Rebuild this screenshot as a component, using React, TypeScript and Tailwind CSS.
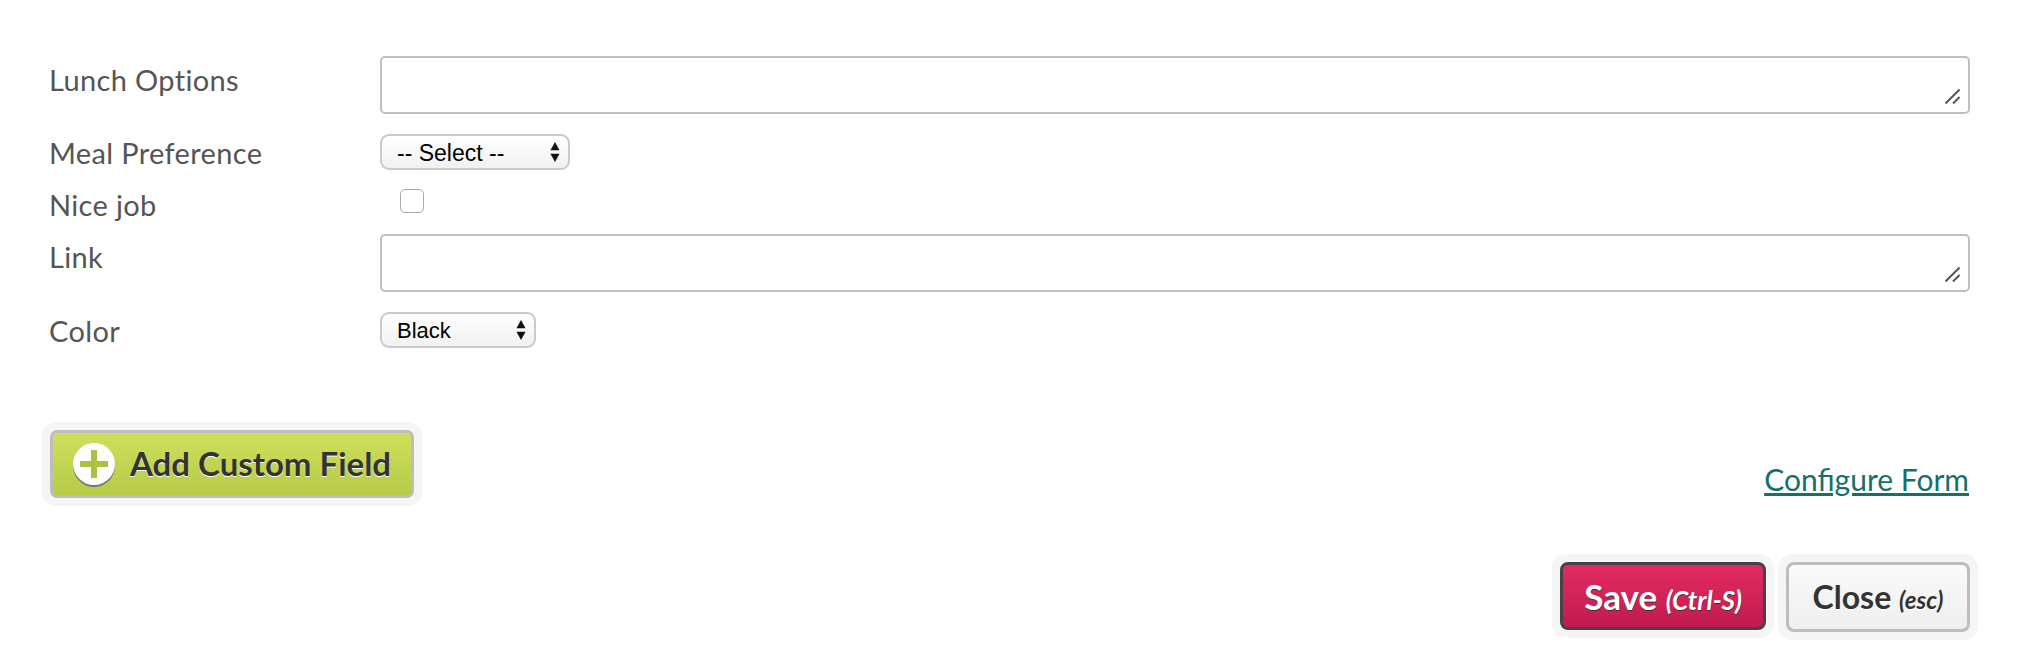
import React from 'react';

const labelClass = "w-[331px] -ml-px shrink-0 text-[29px] tracking-[0.35px] leading-[34px] text-[#555555]";

const NoteArea = () => (
  <div className="relative w-full h-[58px]">
    <textarea className="block w-full h-full rounded-[5px] border-2 border-[#c0c0c0] bg-white resize-none outline-none" />
    {/* resize grip */}
    <svg viewBox="0 0 15 15" className="absolute right-[10px] bottom-[10px] w-[15px] h-[15px] pointer-events-none" stroke="#555555" strokeWidth="2" fill="none">
      <path d="M0.5 14.5L14.5 0.5" />
      <path d="M8 14.5L14.5 8" />
    </svg>
  </div>
);

const SelectArrows = () => (
  <svg viewBox="0 0 10 22" className="absolute right-[10px] top-[8px] w-[10px] h-[20px] pointer-events-none" fill="#111">
    <path d="M5 0L10 9H0Z" />
    <path d="M5 22L0 13H10Z" />
  </svg>
);

const FakeSelect = ({ value, widthClass, textClass }: { value: string; widthClass: string; textClass: string }) => (
  <div className={`relative ${widthClass}`}>
    <select
      defaultValue={value}
      className={`block w-full h-[36px] appearance-none rounded-[9px] border-2 border-[#c9c9c9] bg-gradient-to-b from-white to-[#f1f1f1] pl-[15px] text-black outline-none font-['Liberation_Sans',sans-serif] ${textClass}`}
    >
      <option>{value}</option>
    </select>
    <SelectArrows />
  </div>
);

const App: React.FC = () => {
  return (
    <div className="w-[2028px] h-[668px] overflow-hidden bg-white pl-[50px] pr-[58px] pt-[56px] font-['Lato',sans-serif]">
      <div className="flex h-[78px]">
        <label className={`${labelClass} pt-[7px]`}>Lunch Options</label>
        <NoteArea />
      </div>
      <div className="flex h-[52px]">
        <label className={`${labelClass} pt-[2px]`}>Meal Preference</label>
        <FakeSelect value="-- Select --" widthClass="w-[190px]" textClass="text-[23px]" />
      </div>
      <div className="flex h-[48px]">
        <label className={`${labelClass} pt-[2px]`}>Nice job</label>
        <input
          type="checkbox"
          className="ml-[20px] mt-[3px] w-[24px] h-[24px] appearance-none rounded-[5px] border-[1.5px] border-[#aaaaaa] bg-white"
        />
      </div>
      <div className="flex h-[78px]">
        <label className={`${labelClass} pt-[6px]`}>Link</label>
        <NoteArea />
      </div>
      <div className="flex h-[110px]">
        <label className={`${labelClass} pt-[2px]`}>Color</label>
        <FakeSelect value="Black" widthClass="w-[156px]" textClass="text-[22px]" />
      </div>

      <div className="flex items-end justify-between h-[84px]">
        <div className="-ml-2 rounded-[14px] bg-[#f5f5f5] p-2">
          <button className="flex items-center w-[364px] h-[68px] rounded-[7px] border-[3px] border-[#bdbdbd] bg-gradient-to-b from-[#cedf5c] to-[#b7cb47] pl-[20px] text-[33px] font-bold text-[#333333] [text-shadow:0_1px_0_#ffffff]">
            <span className="flex items-center justify-center w-[42px] h-[42px] rounded-full bg-white shadow-[0_2px_0_#777777] mr-[15px]">
              <svg viewBox="0 0 28 28" className="w-[28px] h-[28px]" fill="#a9c23f">
                <path d="M11 0H17V11H28V17H17V28H11V17H0V11H11Z" />
              </svg>
            </span>
            Add Custom Field
          </button>
        </div>
        <a href="#" className="mr-px mb-[9px] text-[30px] leading-[36px] text-[#16706a] underline">
          Configure Form
        </a>
      </div>

      <div className="flex justify-end items-start gap-1 -mr-2 mt-[48px]">
        <div className="rounded-[14px] bg-[#f5f5f5] p-2">
          <button className="block w-[206px] h-[68px] rounded-[8px] border-[3px] border-[#444444] bg-gradient-to-b from-[#e22b60] to-[#c21a50] text-white font-bold text-[35px] [text-shadow:0_1px_0_#333333]">
            Save <em className="text-[26px]">(Ctrl-S)</em>
          </button>
        </div>
        <div className="rounded-[14px] bg-[#f5f5f5] p-2">
          <button className="block w-[184px] h-[70px] rounded-[8px] border-[3px] border-[#bdbdbd] bg-gradient-to-b from-[#fafafa] to-[#eeeeee] text-[#333333] font-bold text-[32px] [text-shadow:0_1px_0_#ffffff]">
            Close <em className="text-[24px]">(esc)</em>
          </button>
        </div>
      </div>
    </div>
  );
};

export default App;
